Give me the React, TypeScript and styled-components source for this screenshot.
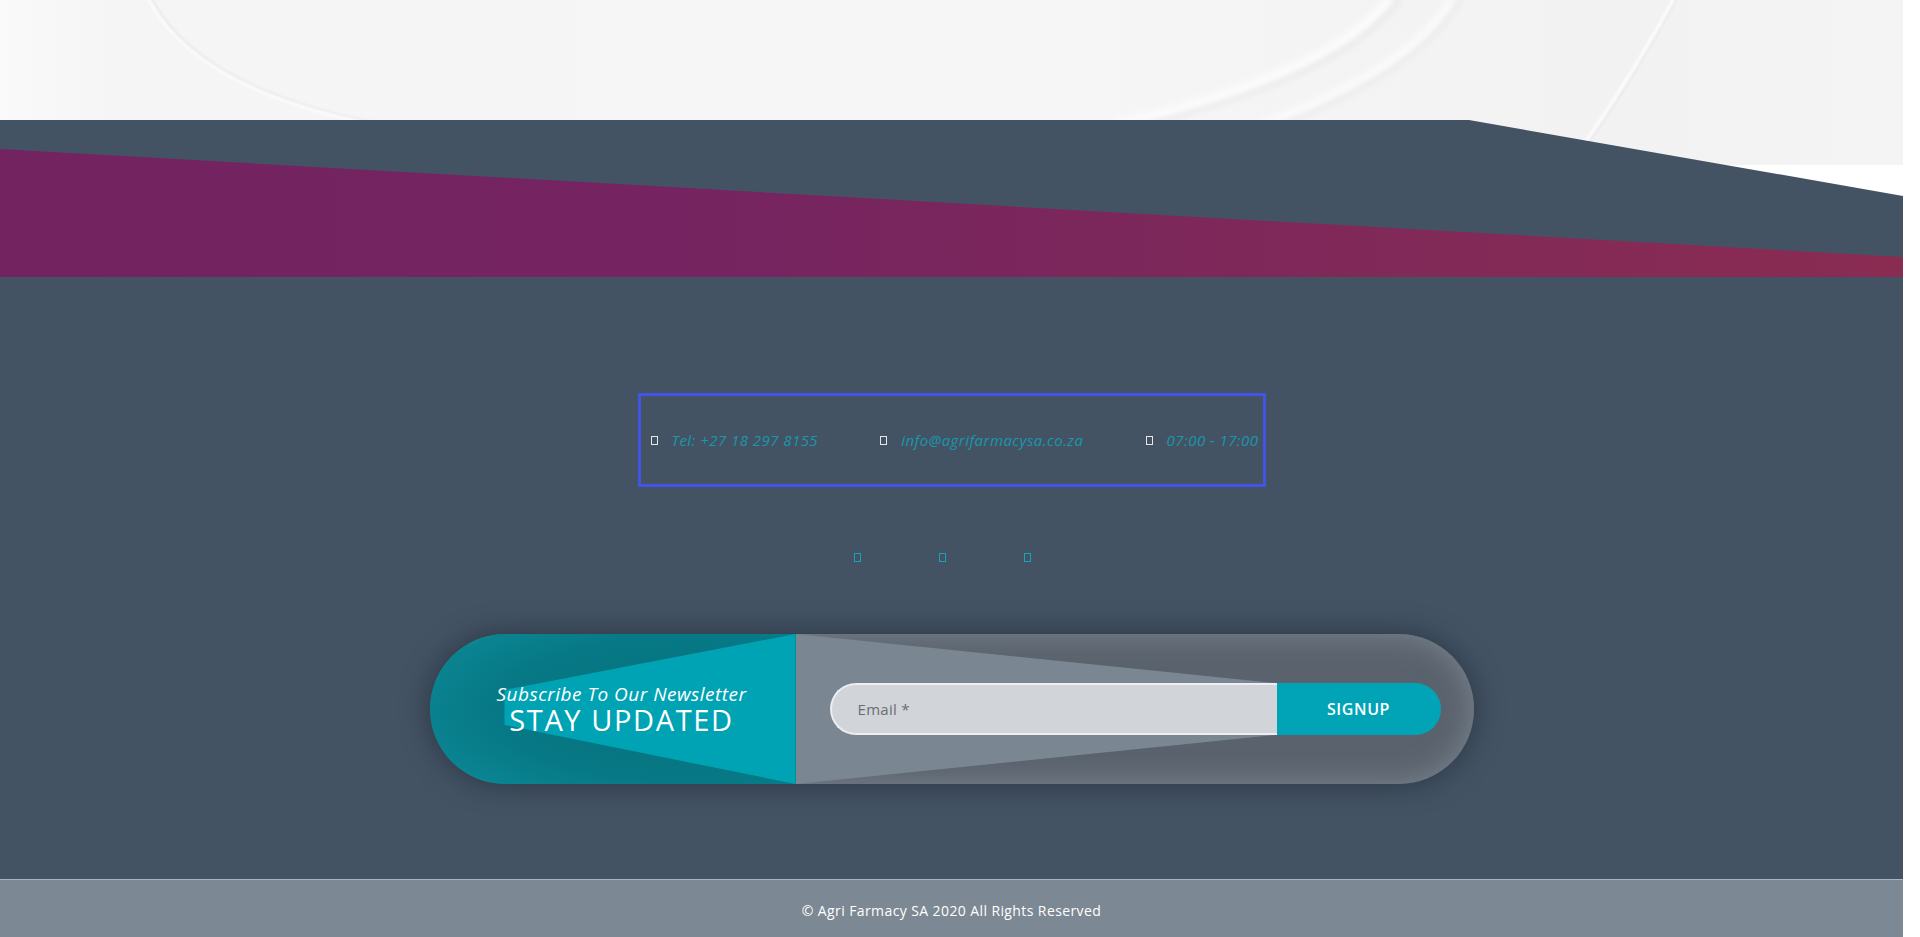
import React from "react";
import styled, { createGlobalStyle } from "styled-components";

const GlobalStyle = createGlobalStyle`
  html, body {
    margin: 0;
    padding: 0;
    background: #fff;
    overflow: hidden;
  }
  * { box-sizing: border-box; }
  body {
    font-family: "Open Sans", "Liberation Sans", sans-serif;
  }
`;

const Page = styled.div`
  width: calc(100% - 17px);
  background: #fff;
`;

const Hero = styled.div`
  height: 165px;
  background: linear-gradient(90deg, #fafafa 0%, #f5f5f5 6%, #f6f6f6 55%, #f2f2f2 85%, #f4f4f4 100%);
  overflow: hidden;

  svg {
    display: block;
    width: 100%;
    height: 100%;
  }
`;

const FooterSection = styled.section`
  margin-top: -45px;
  background: #435364;
  clip-path: polygon(0 0, 1469px 0, 100% 76px, 100% 100%, 0 100%);
  padding: 29px 0 95px;
  display: flex;
  flex-direction: column;
  align-items: center;
`;

const Band = styled.div`
  align-self: stretch;
  height: 128px;
  background: linear-gradient(90deg, #722360 0%, #752461 35%, #7e285a 65%, #8a2c52 100%);
  clip-path: polygon(0 0, 100% 108px, 100% 100%, 0 100%);
`;

const ContactBar = styled.ul`
  margin: 116px 0 0;
  padding: 0 4px 0 10px;
  list-style: none;
  width: 628px;
  height: 94px;
  border: 3px solid #4353e8;
  display: flex;
  align-items: center;
  justify-content: space-between;
`;

const ContactItem = styled.li`
  display: flex;
  align-items: center;
  gap: 14px;
  font-style: italic;
  font-size: 15px;
  letter-spacing: 0.45px;
  color: #1a97aa;
  white-space: nowrap;
`;

const Tofu = styled.span<{ $color: string }>`
  display: inline-block;
  width: 7px;
  height: 9px;
  border: 1px solid ${(p) => p.$color};
  flex: none;
`;

const SocialRow = styled.div`
  margin-top: 65px;
  height: 10px;
  padding-right: 18px;
  display: flex;
  align-items: center;
  gap: 78px;
`;

const Newsletter = styled.form`
  margin-top: 72px;
  width: 1044px;
  height: 150px;
  border-radius: 75px;
  display: flex;
  box-shadow: 0 0 28px rgba(22, 30, 40, 0.55);
`;

const TealPanel = styled.div`
  position: relative;
  width: 366px;
  border-radius: 75px 0 0 75px;
  overflow: hidden;
  background: radial-gradient(ellipse 95% 85% at 72% 50%, #05717e 0%, #077885 55%, #0a8390 80%, #159cab 100%);
  display: flex;
  flex-direction: column;
  align-items: center;
  justify-content: center;
  padding: 0 0 0 18px;
  color: #fff;

  &::before {
    content: "";
    position: absolute;
    inset: 0;
    background: #00a3b4;
    clip-path: polygon(100% 0, 100% 100%, 75px 91px, 75px 56px);
  }
`;

const Kicker = styled.span`
  position: relative;
  font-style: italic;
  font-size: 19px;
  letter-spacing: 0.5px;
  line-height: 21px;
`;

const Heading = styled.span`
  position: relative;
  font-size: 29px;
  letter-spacing: 1.6px;
  line-height: 30px;
  text-transform: uppercase;
`;

const GrayPanel = styled.div`
  position: relative;
  flex: 1;
  border-radius: 0 75px 75px 0;
  overflow: hidden;
  background: #5a636d;
  box-shadow: inset 0 0 30px rgba(150, 160, 172, 0.55);
  display: flex;
  align-items: center;
  padding: 0 33px 0 34px;

  &::before {
    content: "";
    position: absolute;
    inset: 0;
    background: #7a8691;
    clip-path: polygon(0 0, 480px 49px, 480px 101px, 0 100%);
  }
`;

const EmailInput = styled.input`
  position: relative;
  width: 447px;
  height: 52px;
  border: 2px solid #eceef0;
  border-right: none;
  border-radius: 26px 0 0 26px;
  background: #d1d4d9;
  padding: 0 0 0 26px;
  font-family: inherit;
  font-size: 15px;
  letter-spacing: 0.3px;
  color: #444;
  outline: none;

  &::placeholder {
    color: #6a6e74;
  }
`;

const SignupButton = styled.button`
  position: relative;
  width: 164px;
  height: 52px;
  border: none;
  border-radius: 0 26px 26px 0;
  background: #00a4b6;
  color: #fff;
  font-family: inherit;
  font-weight: 600;
  font-size: 16px;
  letter-spacing: 0.6px;
  cursor: pointer;
`;

const Copyright = styled.footer`
  background: #7c8893;
  border-top: 1px solid #a9b4be;
  text-align: center;
  color: #fff;
  font-size: 14px;
  letter-spacing: 0.4px;
  line-height: 20px;
  padding: 21px 0 30px;
`;

const HeroArt = () => (
  <svg viewBox="0 0 1903 165" preserveAspectRatio="none">
    <defs>
      <filter id="soft" x="-10%" y="-10%" width="120%" height="120%">
        <feGaussianBlur stdDeviation="3" />
      </filter>
      <filter id="softer" x="-10%" y="-10%" width="120%" height="120%">
        <feGaussianBlur stdDeviation="1.2" />
      </filter>
    </defs>
    <g fill="none" strokeLinecap="round">
      <path d="M152 0 Q 204 95 403 128" stroke="#ebebeb" strokeWidth="3" filter="url(#softer)" />
      <path d="M149 0 Q 200 96 399 129" stroke="#fdfdfd" strokeWidth="2.5" filter="url(#softer)" />

      <path d="M1396 0 Q 1337 78 1124 126" stroke="#e9e9e9" strokeWidth="10" filter="url(#soft)" />
      <path d="M1389 0 Q 1330 75 1117 124" stroke="#fdfdfd" strokeWidth="9" filter="url(#soft)" />

      <path d="M1458 0 Q 1416 72 1272 126" stroke="#eaeaea" strokeWidth="8" filter="url(#soft)" />
      <path d="M1452 0 Q 1410 70 1264 124" stroke="#fdfdfd" strokeWidth="7" filter="url(#soft)" />

      <path d="M1676 0 Q 1633 80 1570 170" stroke="#ebebeb" strokeWidth="3" filter="url(#softer)" />
      <path d="M1673 0 Q 1630 80 1566 170" stroke="#fdfdfd" strokeWidth="3" filter="url(#softer)" />
    </g>
  </svg>
);

const contacts = ["Tel: +27 18 297 8155", "info@agrifarmacysa.co.za", "07:00 - 17:00"];

export default function App() {
  return (
    <Page>
      <GlobalStyle />
      <Hero>
        <HeroArt />
      </Hero>
      <FooterSection>
        <Band />
        <ContactBar>
          {contacts.map((c) => (
            <ContactItem key={c}>
              <Tofu $color="#e4e6e8" />
              {c}
            </ContactItem>
          ))}
        </ContactBar>
        <SocialRow>
          <Tofu $color="#19a2b3" />
          <Tofu $color="#19a2b3" />
          <Tofu $color="#19a2b3" />
        </SocialRow>
        <Newsletter onSubmit={(e) => e.preventDefault()}>
          <TealPanel>
            <Kicker>Subscribe To Our Newsletter</Kicker>
            <Heading>Stay Updated</Heading>
          </TealPanel>
          <GrayPanel>
            <EmailInput type="email" placeholder="Email *" />
            <SignupButton type="submit">SIGNUP</SignupButton>
          </GrayPanel>
        </Newsletter>
      </FooterSection>
      <Copyright>© Agri Farmacy SA 2020 All Rights Reserved</Copyright>
    </Page>
  );
}
